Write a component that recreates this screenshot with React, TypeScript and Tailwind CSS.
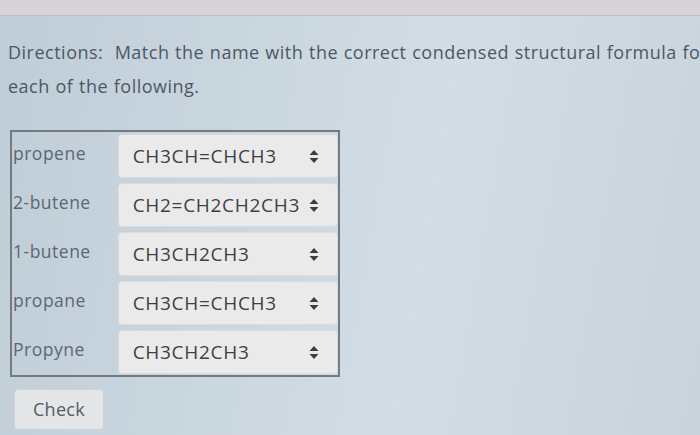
const rows = [
  { name: 'propene', value: 'CH3CH=CHCH3' },
  { name: '2-butene', value: 'CH2=CH2CH2CH3' },
  { name: '1-butene', value: 'CH3CH2CH3' },
  { name: 'propane', value: 'CH3CH=CHCH3' },
  { name: 'Propyne', value: 'CH3CH2CH3' },
];

function UpDown() {
  return (
    <svg width="10" height="13" viewBox="0 0 10 13" className="fill-[#3a3f45]">
      <path d="M5 0 L9.5 5 L0.5 5 Z" />
      <path d="M5 13 L9.5 8 L0.5 8 Z" />
    </svg>
  );
}

export default function App() {
  return (
    <div className="w-[700px] h-[435px] overflow-hidden bg-[linear-gradient(100deg,#bfcdd8_0%,#cbd7df_35%,#d2dde5_60%,#c9d3da_100%)] font-['Open_Sans','Liberation_Sans',sans-serif] text-[#4b5866]">
      <div className="h-[16px] bg-[#d8d2d9] border-b border-[#b9c3cb]" />
      <div className="pl-[8px] pt-[19px] text-[18px] leading-[34px] tracking-[0.5px] [word-spacing:0.5px] whitespace-nowrap">
        <p>Directions:&nbsp; Match the name with the correct condensed structural formula for</p>
        <p>each of the following.</p>
      </div>
      <div className="ml-[10px] mt-[27px] w-[330px] border-2 border-[#737a80] pt-[2px] pb-[1px] flex flex-col gap-[5px]">
        {rows.map((r) => (
          <div key={r.name} className="flex items-center h-[44px]">
            <span className="w-[106px] pl-[1px] text-[17.5px] tracking-[0.5px] text-[#5a6776] -mt-[6px]">{r.name}</span>
            <div className="flex items-center justify-between w-[221px] h-[44px] rounded-[4px] bg-[#ebeaeb] border border-[#dcdcde] pl-[14px] pr-[18px] text-[19px] tracking-[0.7px] text-[#3d4146]">
              <span>{r.value}</span>
              <UpDown />
            </div>
          </div>
        ))}
      </div>
      <button className="ml-[14px] mt-[12px] w-[90px] h-[41px] rounded-[4px] bg-[#e4e5e6] border border-[#cfd2d4] text-[18px] tracking-[0.3px] text-[#555c63]">
        Check
      </button>
    </div>
  );
}
